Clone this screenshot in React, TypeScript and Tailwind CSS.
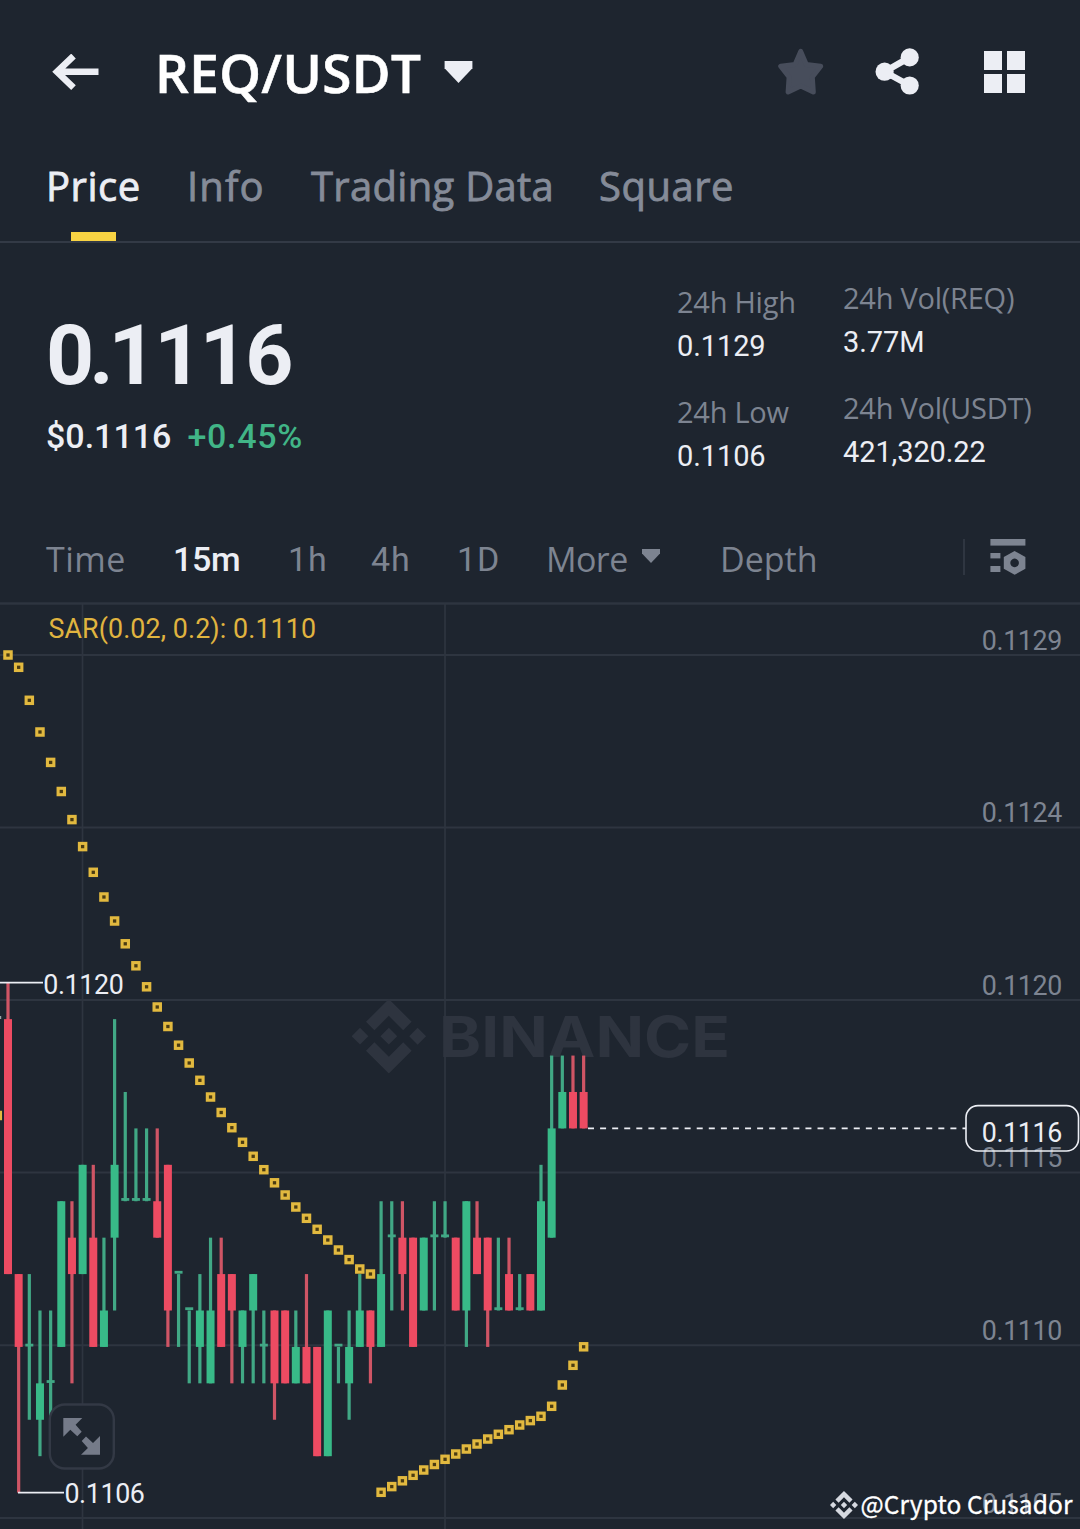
import React from "react";

const WORD = "font-['Open_Sans',sans-serif]";
const NUM = "font-['Roboto',sans-serif]";

const BINANCE =
  "M16.624 13.9202l2.7175 2.7154-7.353 7.353-7.353-7.352 2.7175-2.7164 4.6355 4.6595 4.6356-4.6595zm4.6366-4.6366L24 12l-2.7154 2.7164L18.5682 12l2.6924-2.7164zm-9.272.001l2.7163 2.6914-2.7164 2.7174v-.001L9.2721 12l2.7164-2.7154zm-9.2722-.001L5.4088 12l-2.6914 2.6924L0 12l2.7164-2.7164zM11.9885.0115l7.353 7.329-2.7174 2.7154-4.6356-4.6356-4.6355 4.6595-2.7174-2.7154 7.353-7.353z";

function Header() {
  return (
    <header className="flex h-[144px] items-center pl-[52px] pr-[55px]">
      <svg className="h-[36px] w-[47px]" viewBox="0 0 47 36" fill="none" stroke="#eceef4" strokeWidth="6.6">
        <path d="M46.5 17.8H5M21.5 2L5 17.8L21.5 33.6" strokeLinejoin="miter" />
      </svg>
      <h1 className={`${WORD} ml-[56px] mt-[2px] w-[289px] whitespace-nowrap text-[53px] font-semibold leading-[72px] tracking-[0.4px] text-white [-webkit-text-stroke:0.6px]`}>
        REQ/USDT
      </h1>
      <svg className="h-[23px] w-[29px]" viewBox="0 0 29 23" fill="#eceef4">
        <path d="M.6 0H28.4V7.2L14.5 22L.6 7.2z" />
      </svg>
      <div className="ml-auto flex items-center">
        <svg className="h-[48px] w-[46px]" viewBox="0 0 46 48" fill="#474d5b" stroke="#474d5b" strokeWidth="5" strokeLinejoin="round">
          <path d="M22.7 3.4L28.3 16.4L42.7 18.2L34.3 29L35.3 44L22.7 38L10.1 44L11.1 29L2.7 18.2L17.1 16.4z" />
        </svg>
        <svg className="ml-[51px] h-[48px] w-[46px]" viewBox="0 0 46 48" fill="#eceef4">
          <circle cx="34.7" cy="9.4" r="9.1" />
          <circle cx="9.6" cy="23.7" r="9.1" />
          <circle cx="34.7" cy="37.5" r="9.1" />
          <path d="M34.7 9.4L9.6 23.7L34.7 37.5" fill="none" stroke="#eceef4" strokeWidth="6.4" />
        </svg>
        <div className="ml-[63px] grid grid-cols-2 gap-x-[4.5px] gap-y-[4.5px]">
          <i className="size-[18.4px] bg-[#eceef4]" />
          <i className="size-[18.4px] bg-[#eceef4]" />
          <i className="size-[18.4px] bg-[#eceef4]" />
          <i className="size-[18.4px] bg-[#eceef4]" />
        </div>
      </div>
    </header>
  );
}

function Tabs() {
  return (
    <nav className={`${WORD} flex h-[99px] border-b-2 border-[#333a46] pl-[46px] text-[40px] leading-[84px] text-[#858b98] whitespace-nowrap [-webkit-text-stroke:0.8px]`}>
      <div className="relative w-[141px] tracking-[0.5px] text-[#eceef4]">
        Price
        <span className="absolute bottom-0 left-[25px] h-[9px] w-[45px] bg-[#f8d343]" />
      </div>
      <div className="w-[124px] tracking-[1.1px]">Info</div>
      <div className="w-[288px] tracking-[0.3px]">Trading Data</div>
      <div className="tracking-[0.5px]">Square</div>
    </nav>
  );
}

function Stat({ label, value }: { label: string; value: string }) {
  return (
    <div className="mb-[30px] whitespace-nowrap">
      <div className={`${WORD} h-[36px] text-[29px] leading-[36px] tracking-[-0.25px] text-[#7d8491]`}>{label}</div>
      <div className={`${NUM} mt-[8px] h-[36px] text-[29px] leading-[36px] tracking-[-0.1px] text-[#eceef4]`}>{value}</div>
    </div>
  );
}

function Summary() {
  return (
    <section className="flex h-[272px] pl-[46px]">
      <div className={`${NUM} w-[631px] pt-[71px]`}>
        <div className="text-[84px] font-bold leading-[84px] tracking-[-2.6px] text-[#eceef4]">
          <span className="tracking-[-5px]">0.</span>1116
        </div>
        <div className="mt-[18px] flex gap-[16px] text-[34px] font-medium leading-[40px]">
          <span className="text-[#eceef4]">$0.1116</span>
          <span className="tracking-[0.7px] text-[#41b587]">+0.45%</span>
        </div>
      </div>
      <div className="w-[166px] pt-[41px]">
        <Stat label="24h High" value="0.1129" />
        <Stat label="24h Low" value="0.1106" />
      </div>
      <div className="pt-[37px]">
        <Stat label="24h Vol(REQ)" value="3.77M" />
        <Stat label="24h Vol(USDT)" value="421,320.22" />
      </div>
    </section>
  );
}

function Intervals() {
  return (
    <div className="flex h-[87px] items-center whitespace-nowrap pl-[46px] text-[34px] leading-[44px] text-[#7d8491]">
      <div className={`${WORD} w-[127px] tracking-[0.5px]`}>Time</div>
      <div className={`${NUM} w-[115px] pt-[1px] font-medium tracking-[-0.3px] text-[#eceef4]`}>15m</div>
      <div className={`${NUM} w-[83px] pt-[1px] tracking-[0.8px]`}>1h</div>
      <div className={`${NUM} w-[86px] pt-[1px] tracking-[0.8px]`}>4h</div>
      <div className={`${NUM} w-[89px] pt-[1px] tracking-[1px]`}>1D</div>
      <div className={`${WORD} w-[96px] tracking-[-0.6px]`}>More</div>
      <svg className="mb-[6px] h-[14px] w-[18px]" viewBox="0 0 18 14" fill="#7d8491">
        <path d="M0 0H18V4.5L9 14L0 4.5z" />
      </svg>
      <div className={`${WORD} ml-[60px]`}>Depth</div>
      <span className="mb-[4px] ml-auto h-[36px] w-[2px] bg-[#2f3641]" />
      <svg className="mb-[4px] ml-[25px] mr-[54px] h-[36px] w-[36px]" viewBox="0 0 36 36" fill="#7d8491">
        <rect x="0.4" y="0" width="35" height="6.6" />
        <rect x="0.4" y="14" width="10" height="5.4" />
        <rect x="0.4" y="27" width="10" height="6" />
        <path fillRule="evenodd" d="M24.6 12L35.4 18V29.8L24.6 35.8L13.8 29.8V18zM24.6 19.6a4.3 4.3 0 1 0 .01 0z" />
      </svg>
    </div>
  );
}

// [rising, high, bodyTop, bodyBottom, low], in units of 0.0001 above 0.1100
type Candle = [number, number, number, number, number];
const CANDLES: Candle[] = [
  [0, 20, 19, 12, 12], [0, 12, 12, 10, 6], [1, 12, 10, 10, 8], [1, 11, 9, 8, 7], [1, 11, 9, 9, 8],
  [1, 14, 14, 10, 10], [0, 14, 13, 12, 9], [1, 15, 15, 12, 12], [0, 15, 13, 10, 10], [1, 13, 11, 10, 10],
  [1, 19, 15, 13, 11], [1, 17, 14, 14, 14], [1, 16, 14, 14, 14], [1, 16, 14, 14, 14], [0, 16, 14, 13, 13],
  [0, 15, 15, 11, 10], [1, 12, 12, 12, 10], [1, 11, 11, 11, 9], [1, 12, 11, 10, 9], [1, 13, 11, 9, 9],
  [0, 13, 12, 10, 10], [0, 12, 12, 11, 9], [1, 11, 11, 10, 9], [1, 12, 12, 11, 9], [1, 11, 10, 10, 9],
  [0, 11, 11, 9, 8], [0, 11, 11, 9, 9], [1, 11, 10, 9, 9], [0, 12, 10, 9, 9], [0, 10, 10, 7, 7],
  [1, 11, 11, 7, 7], [1, 10, 10, 10, 9], [1, 11, 10, 9, 8], [1, 12, 11, 10, 10], [0, 11, 11, 10, 9],
  [1, 14, 12, 10, 10], [1, 14, 13, 13, 11], [0, 14, 13, 12, 11], [0, 13, 13, 10, 10], [1, 13, 13, 11, 11],
  [1, 14, 13, 13, 11], [1, 14, 13, 13, 13], [0, 13, 13, 11, 11], [1, 14, 14, 11, 10], [0, 14, 13, 12, 12],
  [0, 13, 13, 11, 10], [1, 13, 11, 11, 11], [0, 13, 12, 11, 11], [1, 12, 11, 11, 11], [0, 12, 12, 11, 11],
  [1, 15, 14, 11, 11], [1, 18, 16, 13, 13], [1, 18, 17, 16, 16], [0, 18, 17, 16, 16], [0, 18, 17, 16, 16],
];

const SAR = [
  655, 667.3, 700.3, 732, 762.4, 791.5, 819.6, 846.6, 872.3, 897, 921, 943.8, 965.8, 986.8, 1007, 1026.5,
  1045.2, 1063, 1080.3, 1097, 1112.5, 1127.7, 1142.3, 1156.3, 1169.7, 1182.8, 1195, 1207, 1218.3, 1229.3,
  1240, 1250, 1259.6, 1269, 1274, 1492.3, 1486.6, 1480.8, 1475.3, 1470, 1464.5, 1459.3, 1454, 1449, 1444,
  1439, 1434.3, 1429.7, 1425, 1420.6, 1416.3, 1406.3, 1385, 1365.3, 1346.8,
];

const xAt = (i: number) => 8 + i * 10.66;
const yAt = (p: number) => 1128.4 + (16 - p) * 36.42;

const AXIS: [string, number][] = [
  ["0.1129", 655], ["0.1124", 827.4], ["0.1120", 1000], ["0.1115", 1172.6], ["0.1110", 1345.2], ["0.1105", 1518],
];

function SarMark({ x, y }: { x: number; y: number }) {
  return <rect x={x - 3.2} y={y - 3.2} width="6.4" height="6.4" fill="#4a3b12" stroke="#e2b93f" strokeWidth="3.1" />;
}

function Label({ x, y, fill, children }: { x: number; y: number; fill: string; children: string }) {
  return (
    <text x={x} y={y} textLength={80.5} fill={fill} className="text-[26.8px]">
      {children}
    </text>
  );
}

function Chart() {
  return (
    <svg className={`${NUM} block h-[927px] w-[1080px]`} viewBox="0 602 1080 927">
      <g stroke="#2e3540" strokeWidth="2">
        <path d="M0 603.5H1080" strokeWidth="2.6" />
        {AXIS.map(([t, y]) => (
          <path key={t} d={`M0 ${y}H1080`} />
        ))}
        <path d="M82.5 603V1529M445 603V1529" strokeWidth="1.7" />
      </g>
      <g fill="#2e343f">
        <svg x="351.6" y="999" width="74.5" height="74.5" viewBox="0 0 24 24">
          <path d={BINANCE} />
        </svg>
        <text x="439" y="1057" textLength="291" lengthAdjust="spacingAndGlyphs" className="font-['Inter',sans-serif] text-[56.5px] font-bold">
          BINANCE
        </text>
      </g>
      {AXIS.map(([t, y]) => (
        <Label key={t} x={981.8} y={y - 5.5} fill="#7d8491">
          {t}
        </Label>
      ))}
      <rect x="-7" y="1016" width="8.2" height="3" fill="#9aa7a8" />
      <SarMark x={-2.7} y={1115.5} />
      {CANDLES.map(([up, high, top, bottom, low], i) => {
        const x = xAt(i);
        const flat = top === bottom;
        return (
          <g key={i}>
            <rect x={x - 1.6} y={yAt(high)} width="3.2" height={yAt(low) - yAt(high)} fill={up ? "#41a885" : "#cf5565"} />
            {flat ? (
              <rect x={x - 4} y={yAt(top) - 3.2} width="8" height="2.8" fill="#41a885" />
            ) : (
              <rect x={x - 4} y={yAt(top)} width="8" height={yAt(bottom) - yAt(top)} fill={up ? "#38ba88" : "#ed4b62"} />
            )}
          </g>
        );
      })}
      {SAR.map((y, i) => (
        <SarMark key={i} x={xAt(i)} y={y} />
      ))}
      <text x="48.5" y="638" textLength="267.5" fill="#e0b43f" className="text-[26.8px]">
        SAR(0.02, 0.2): 0.1110
      </text>
      <path d="M0 982.7H43M18 1492.6H64" stroke="#eceef4" strokeWidth="1.8" />
      <Label x={43.2} y={993.6} fill="#eceef4">0.1120</Label>
      <Label x={64.4} y={1503.3} fill="#eceef4">0.1106</Label>
      <path d="M588 1128.3H966" stroke="#eceef4" strokeWidth="1.8" strokeDasharray="6 6.08" />
      <rect x="966" y="1105.6" width="112.5" height="45.4" rx="12" fill="none" stroke="#eceef4" strokeWidth="1.6" />
      <Label x={981.8} y={1142.3} fill="#eceef4">0.1116</Label>
      <rect x="49.8" y="1404.5" width="64" height="64" rx="15" fill="#1e252f" stroke="#333945" strokeWidth="2.4" />
      <g fill="#757b89">
        <path d="M63.3 1418H82.3L75.6 1424.8L81.7 1431.7L77.3 1436.3L70.3 1429.7L63.3 1436.7z" />
        <path d="M100 1454.7H81L87.9 1448L81.7 1441L86 1436.4L93 1443L100 1436z" />
      </g>
      <svg x="830" y="1491" width="28" height="28" viewBox="0 0 24 24" fill="#d6d9e0">
        <path d={BINANCE} />
      </svg>
      <text x="860.5" y="1513.5" textLength="212" fill="#fff" stroke="#fff" strokeWidth="0.3" className="font-['Noto_Sans_CJK_SC',sans-serif] text-[24.5px]">
        @Crypto Crusador
      </text>
    </svg>
  );
}

export default function App() {
  return (
    <main className="h-[1529px] w-[1080px] overflow-hidden bg-[#1e252f]">
      <Header />
      <Tabs />
      <Summary />
      <Intervals />
      <Chart />
    </main>
  );
}
